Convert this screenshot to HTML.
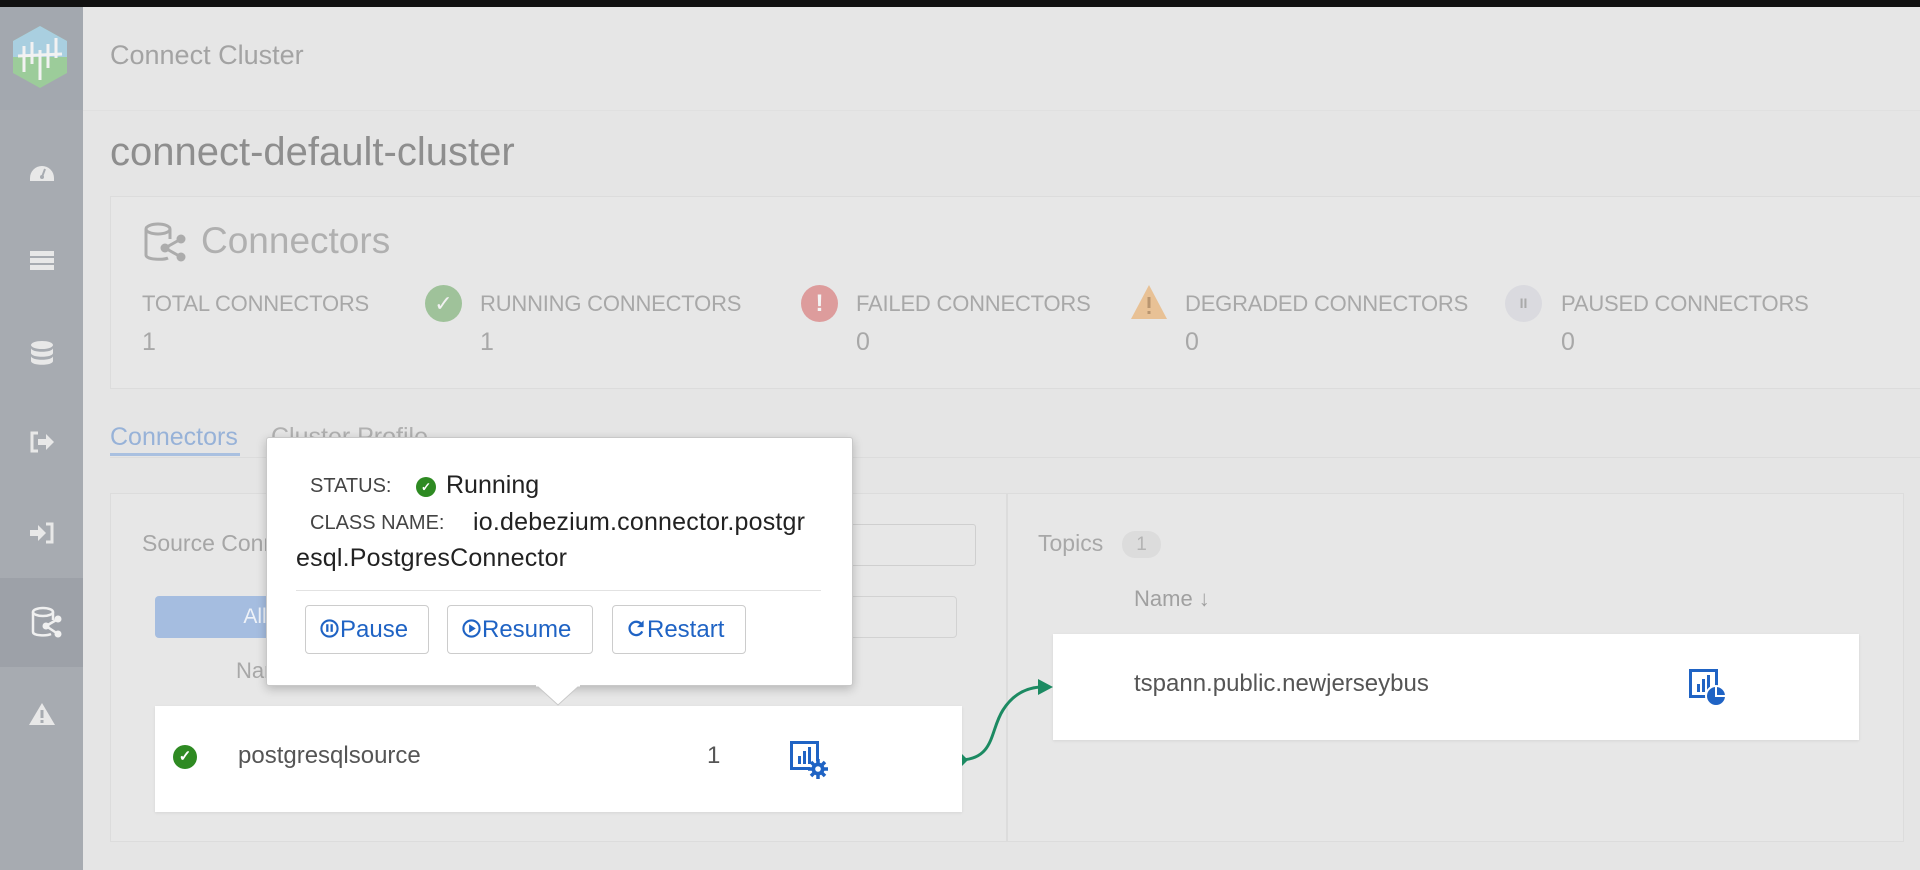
<!DOCTYPE html>
<html><head><meta charset="utf-8"><style>
*{margin:0;padding:0;box-sizing:border-box}
body{width:1920px;height:863px;overflow:hidden;background:#e5e5e5;font-family:"Liberation Sans",Arial,sans-serif;position:relative}
.a{position:absolute;white-space:nowrap}
.sb{left:0;top:0;width:83px;height:863px;background:#a7abb1}
.ico{position:absolute;left:28px;width:28px;height:28px}
.lbl{font-size:22px;color:#a8a8a8;letter-spacing:-0.2px}
.num{font-size:25px;color:#a8a8a8}
.btn{position:absolute;top:605px;height:49px;border:1px solid #ccc;border-radius:4px;color:#1f63c4;font-size:24px;line-height:47px;padding-left:14px;background:#fff}
.btn svg{vertical-align:-1px;margin-right:1px}
</style></head><body>
<div class="a" style="left:0;top:0;width:1920px;height:7px;background:#111"></div>
<div class="a sb" style="top:7px"></div>
<div class="a" style="left:0;top:7px;width:83px;height:103px;background:#a3a8af"></div>
<div class="a" style="left:0;top:578px;width:83px;height:89px;background:#9da1a8"></div>
<svg class="a" style="left:10px;top:24px" width="60" height="66" viewBox="0 0 60 66">
<polygon points="30,2 57,17 57,49 30,64 3,49 3,17" fill="#9ccc9a"/>
<polygon points="30,2 57,17 57,33 3,33 3,17" fill="#a9cfe0"/>
<g stroke="#f2f2f2" stroke-width="3"><line x1="14" y1="22" x2="14" y2="48"/><line x1="22" y1="18" x2="22" y2="40"/><line x1="30" y1="26" x2="30" y2="56"/><line x1="38" y1="20" x2="38" y2="44"/><line x1="46" y1="14" x2="46" y2="34"/><line x1="8" y1="32" x2="52" y2="30"/></g></svg>
<svg class="ico" style="top:158px" viewBox="0 0 28 28"><path d="M2 20a12 12 0 0 1 24 0v3H2z" fill="#e8e8e8"/><circle cx="14" cy="19" r="2" fill="#a7abb1"/><line x1="14" y1="19" x2="17" y2="11" stroke="#a7abb1" stroke-width="2"/></svg>
<svg class="ico" style="top:248px" viewBox="0 0 28 28"><g fill="#e8e8e8"><rect x="2" y="3" width="24" height="5"/><rect x="2" y="10" width="24" height="5"/><rect x="2" y="17" width="24" height="5"/></g></svg>
<svg class="ico" style="top:339px" viewBox="0 0 28 28"><g fill="#e8e8e8"><ellipse cx="14" cy="6" rx="11" ry="4"/><path d="M3 9c0 5 22 5 22 0v5c0 5-22 5-22 0z"/><path d="M3 17c0 5 22 5 22 0v5c0 5-22 5-22 0z"/></g></svg>
<svg class="ico" style="top:428px" viewBox="0 0 28 28"><path d="M10 5H4v18h6" fill="none" stroke="#e8e8e8" stroke-width="3"/><path d="M10 11h8V6l8 8-8 8v-5h-8z" fill="#e8e8e8"/></svg>
<svg class="ico" style="top:519px" viewBox="0 0 28 28"><path d="M18 5h6v18h-6" fill="none" stroke="#e8e8e8" stroke-width="3"/><path d="M2 11h8V6l8 8-8 8v-5H2z" fill="#e8e8e8"/></svg>
<svg class="ico" style="top:606px;left:30px;width:34px;height:34px" viewBox="0 0 34 34"><g fill="none" stroke="#f0f0f0" stroke-width="2.5"><ellipse cx="13" cy="6" rx="10" ry="4"/><path d="M3 6v20c0 4 14 4 18 2M23 6v8"/><line x1="16" y1="20" x2="28" y2="13"/><line x1="16" y1="20" x2="28" y2="28"/></g><g fill="#f0f0f0"><circle cx="16" cy="20" r="3.5"/><circle cx="28" cy="13" r="3.5"/><circle cx="28" cy="28" r="3.5"/></g></svg>
<svg class="ico" style="top:700px" viewBox="0 0 28 28"><path d="M14 3L27 25H1z" fill="#e8e8e8"/><rect x="12.5" y="10" width="3" height="8" fill="#a7abb1"/><rect x="12.5" y="20" width="3" height="3" fill="#a7abb1"/></svg>

<div class="a" style="left:83px;top:7px;width:1837px;height:103px;background:#e6e6e6"></div>
<div class="a" style="left:110px;top:40px;font-size:27px;color:#a3a3a3">Connect Cluster</div>
<div class="a" style="left:83px;top:110px;width:1837px;height:1px;background:#e0e0e0"></div>
<div class="a" style="left:110px;top:130px;font-size:40px;color:#8e8e8e">connect-default-cluster</div>

<div class="a" style="left:110px;top:196px;width:1830px;height:193px;border:1px solid #dcdcdc;background:#e7e7e7"></div>
<svg class="a" style="left:143px;top:222px" width="46" height="42" viewBox="0 0 46 42"><g fill="none" stroke="#acacac" stroke-width="3"><ellipse cx="15" cy="7" rx="12" ry="5"/><path d="M3 7v26c0 5 18 5 22 3M27 7v10"/><line x1="22" y1="26" x2="38" y2="17"/><line x1="22" y1="26" x2="38" y2="35"/></g><g fill="#acacac"><circle cx="22" cy="26" r="4.5"/><circle cx="38" cy="17" r="4.5"/><circle cx="38" cy="35" r="4.5"/></g></svg>
<div class="a" style="left:201px;top:220px;font-size:37px;color:#b0b0b0">Connectors</div>
<div class="a lbl" style="left:142px;top:291px">TOTAL CONNECTORS</div>
<div class="a num" style="left:142px;top:328px">1</div>
<div class="a" style="left:425px;top:285px;width:37px;height:37px;border-radius:50%;background:#9fc29a;font-size:22px;text-align:center;line-height:37px;color:#f1f1f1">✓</div>
<div class="a lbl" style="left:480px;top:291px">RUNNING CONNECTORS</div>
<div class="a num" style="left:480px;top:328px">1</div>
<div class="a" style="left:801px;top:285px;width:37px;height:37px;border-radius:50%;background:#dd9c9c;color:#f4f4f4;font-size:24px;font-weight:bold;text-align:center;line-height:37px">!</div>
<div class="a lbl" style="left:856px;top:291px">FAILED CONNECTORS</div>
<div class="a num" style="left:856px;top:328px">0</div>
<svg class="a" style="left:1130px;top:284px" width="38" height="36" viewBox="0 0 38 36"><path d="M19 1L37 35H1z" fill="#e8c195"/><rect x="17.5" y="13" width="3" height="11" fill="#b89570"/><rect x="17.5" y="27" width="3" height="3" fill="#b89570"/></svg>
<div class="a lbl" style="left:1185px;top:291px">DEGRADED CONNECTORS</div>
<div class="a num" style="left:1185px;top:328px">0</div>
<div class="a" style="left:1505px;top:285px;width:37px;height:37px;border-radius:50%;background:#dadadf;color:#aaa;font-size:14px;font-weight:bold;text-align:center;line-height:37px">II</div>
<div class="a lbl" style="left:1561px;top:291px">PAUSED CONNECTORS</div>
<div class="a num" style="left:1561px;top:328px">0</div>

<div class="a" style="left:110px;top:423px;font-size:25px;color:#97b2d8">Connectors</div>
<div class="a" style="left:110px;top:453px;width:130px;height:3px;background:#a9c0e0"></div>
<div class="a" style="left:110px;top:457px;width:1810px;height:1px;background:#dcdcdc"></div>
<div class="a" style="left:271px;top:423px;font-size:25px;color:#b0b0b0">Cluster Profile</div>

<div class="a" style="left:110px;top:493px;width:897px;height:349px;border:1px solid #dcdcdc;background:#e7e7e7"></div>
<div class="a" style="left:1007px;top:493px;width:897px;height:349px;border:1px solid #dcdcdc;background:#e7e7e7"></div>
<div class="a" style="left:142px;top:530px;font-size:23px;color:#a6a6a6">Source Connectors</div>
<div class="a" style="left:640px;top:524px;width:336px;height:42px;border:1px solid #cfcfcf;border-radius:3px"></div>
<div class="a" style="left:155px;top:596px;width:200px;height:42px;border-radius:4px;background:#a5bde0;color:#eef2f8;font-size:21px;line-height:42px;text-align:center">All</div>
<div class="a" style="left:640px;top:596px;width:317px;height:42px;border:1px solid #d2d2d2;border-radius:4px;color:#a8bcd8;font-size:21px;line-height:42px;text-align:center">Failed</div>
<div class="a" style="left:236px;top:658px;font-size:22px;color:#a8a8a8">Name</div>

<div class="a" style="left:155px;top:706px;width:807px;height:106px;background:#fff;box-shadow:0 1px 3px rgba(0,0,0,.08)"></div>
<div class="a" style="left:173px;top:745px;width:24px;height:24px;border-radius:50%;background:#2e8a22;color:#fff;font-size:15px;text-align:center;line-height:24px;font-weight:bold">✓</div>
<div class="a" style="left:238px;top:742px;font-size:24px;color:#555">postgresqlsource</div>
<div class="a" style="left:707px;top:742px;font-size:24px;color:#555">1</div>
<svg class="a" style="left:790px;top:741px" width="38" height="38" viewBox="0 0 38 38"><rect x="1.5" y="1.5" width="26" height="26" fill="none" stroke="#1f63c4" stroke-width="3"/><g fill="#1f63c4"><rect x="8" y="15" width="3" height="8"/><rect x="13" y="10" width="3" height="13"/><rect x="18" y="6" width="3" height="17"/></g><circle cx="28" cy="28" r="8" fill="#fff"/><g stroke="#1f63c4" stroke-width="3.5"><line x1="28" y1="18" x2="28" y2="38"/><line x1="18" y1="28" x2="38" y2="28"/><line x1="21" y1="21" x2="35" y2="35"/><line x1="35" y1="21" x2="21" y2="35"/></g><circle cx="28" cy="28" r="6.5" fill="#1f63c4"/><circle cx="28" cy="28" r="2.8" fill="#fff"/></svg>

<svg class="a" style="left:955px;top:670px" width="110" height="100" viewBox="0 0 110 100"><path d="M7 90C40 88 35 60 48 40C58 24 72 18 85 17" fill="none" stroke="#1c8a62" stroke-width="3"/><path d="M83 9L98 17L83 25z" fill="#1c8a62"/><path d="M7 84v12l6-6z" fill="#1c8a62"/></svg>

<div class="a" style="left:1038px;top:530px;font-size:23px;color:#a8a8a8">Topics</div>
<div class="a" style="left:1122px;top:531px;width:39px;height:27px;border-radius:13px;background:#dcdcdc;color:#b4b4b4;font-size:19px;text-align:center;line-height:27px">1</div>
<div class="a" style="left:1134px;top:586px;font-size:22px;color:#a0a0a0">Name ↓</div>
<div class="a" style="left:1053px;top:634px;width:806px;height:106px;background:#fff;box-shadow:0 1px 3px rgba(0,0,0,.08)"></div>
<div class="a" style="left:1134px;top:670px;font-size:24px;color:#555">tspann.public.newjerseybus</div>
<svg class="a" style="left:1689px;top:669px" width="38" height="38" viewBox="0 0 38 38"><rect x="1.5" y="1.5" width="26" height="26" fill="none" stroke="#1f63c4" stroke-width="3"/><g fill="#1f63c4"><rect x="8" y="15" width="3" height="8"/><rect x="13" y="10" width="3" height="13"/><rect x="18" y="6" width="3" height="17"/></g><circle cx="27" cy="27" r="10" fill="#1f63c4" stroke="#fff" stroke-width="2"/><path d="M27 18v9h9" fill="none" stroke="#fff" stroke-width="2"/></svg>

<div class="a" style="left:266px;top:437px;width:587px;height:249px;background:#fff;border:1px solid #c8c8c8;border-radius:3px;box-shadow:0 3px 10px rgba(0,0,0,.22)"></div>
<svg class="a" style="left:536px;top:685px" width="44" height="22" viewBox="0 0 44 22"><path d="M0 0L22 20L44 0" fill="#fff" stroke="#c8c8c8"/><rect x="0" y="0" width="44" height="1.5" fill="#fff"/></svg>
<div class="a" style="left:310px;top:475px;font-size:20px;color:#444">STATUS:</div>
<div class="a" style="left:416px;top:477px;width:20px;height:20px;border-radius:50%;background:#2e8a22;color:#fff;font-size:12px;text-align:center;line-height:20px;font-weight:bold">✓</div>
<div class="a" style="left:446px;top:471px;font-size:25px;color:#222">Running</div>
<div class="a" style="left:310px;top:512px;font-size:20px;color:#444">CLASS NAME:</div>
<div class="a" style="left:473px;top:508px;font-size:25px;color:#222;letter-spacing:0.2px">io.debezium.connector.postgr</div>
<div class="a" style="left:296px;top:544px;font-size:25px;color:#222;letter-spacing:0.2px">esql.PostgresConnector</div>
<div class="a" style="left:296px;top:590px;width:525px;height:1px;background:#e2e2e2"></div>
<div class="btn" style="left:305px;width:124px"><svg width="19" height="19" viewBox="0 0 20 20"><circle cx="10" cy="10" r="8.5" fill="none" stroke="#1f63c4" stroke-width="2.2"/><rect x="6.5" y="5.5" width="2.4" height="8" fill="#1f63c4"/><rect x="11.1" y="5.5" width="2.4" height="8" fill="#1f63c4"/></svg>Pause</div>
<div class="btn" style="left:447px;width:146px"><svg width="19" height="19" viewBox="0 0 20 20"><circle cx="10" cy="10" r="8.5" fill="none" stroke="#1f63c4" stroke-width="2.2"/><path d="M7.5 5.5L14.5 10L7.5 14.5z" fill="#1f63c4"/></svg>Resume</div>
<div class="btn" style="left:612px;width:134px"><svg width="19" height="19" viewBox="0 0 20 20"><path d="M15.5 6A7 7 0 1 0 16 13" fill="none" stroke="#1f63c4" stroke-width="2.4"/><path d="M17.5 1.5v7h-7z" fill="#1f63c4"/></svg>Restart</div>
</body></html>
